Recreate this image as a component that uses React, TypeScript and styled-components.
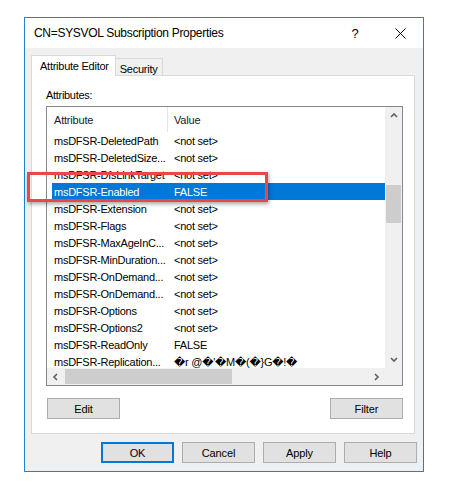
import React from "react";
import styled, { createGlobalStyle } from "styled-components";

const GlobalStyle = createGlobalStyle`
  html, body {
    margin: 0;
    padding: 0;
    background: #ffffff;
  }
  body {
    font-family: "Liberation Sans", Arial, sans-serif;
    font-size: 11px;
    color: #000000;
  }
`;

const Page = styled.div`
  position: relative;
  width: 462px;
  height: 487px;
  padding: 17px 0 0 24px;
  box-sizing: border-box;
`;

const Dialog = styled.div`
  width: 400px;
  height: 455px;
  box-sizing: border-box;
  border: 1px solid #1883d7;
  display: flex;
  flex-direction: column;
  background: #f0f0f0;
`;

const TitleBar = styled.div`
  height: 30px;
  flex: none;
  background: #ffffff;
  display: flex;
  align-items: center;
  padding-left: 9px;
`;

const Title = styled.div`
  flex: 1;
  font-size: 12px;
  letter-spacing: -0.3px;
  color: #000;
`;

const CaptionButton = styled.div<{ $w: number }>`
  width: ${(p) => p.$w}px;
  height: 30px;
  display: flex;
  align-items: center;
  justify-content: center;
  font-size: 13px;
  color: #000;
`;

const Body = styled.div`
  flex: 1;
  display: flex;
  flex-direction: column;
  padding: 7px 8px 8px 6px;
`;

const TabRow = styled.div`
  height: 21px;
  display: flex;
  align-items: flex-end;
`;

const Tab = styled.div<{ $active?: boolean }>`
  box-sizing: border-box;
  height: ${(p) => (p.$active ? 21 : 18)}px;
  padding: ${(p) => (p.$active ? "2px 6px 0 8px" : "2px 4px 0 4px")};
  border: 1px solid #d9d9d9;
  border-bottom: ${(p) => (p.$active ? "none" : "1px solid #d9d9d9")};
  border-left: ${(p) => (p.$active ? "1px solid #d9d9d9" : "none")};
  background: ${(p) => (p.$active ? "#ffffff" : "#f0f0f0")};
  position: relative;
  z-index: ${(p) => (p.$active ? 1 : 0)};
  font-size: 11px;
  letter-spacing: -0.25px;
  line-height: 16px;
  white-space: nowrap;
`;

const Panel = styled.div`
  margin-top: -1px;
  height: 359px;
  box-sizing: border-box;
  border: 1px solid #d9d9d9;
  background: #ffffff;
  display: flex;
  flex-direction: column;
  padding: 12px 11px 14px 14px;
`;

const Label = styled.div`
  line-height: 14px;
  height: 14px;
  margin-bottom: 4px;
  letter-spacing: -0.3px;
`;

const ListBox = styled.div`
  height: 280px;
  box-sizing: border-box;
  border: 1px solid #828790;
  background: #ffffff;
  display: grid;
  grid-template-columns: 1fr 17px;
  grid-template-rows: 1fr 17px;
`;

const View = styled.div`
  overflow: hidden;
  display: flex;
  flex-direction: column;
`;

const Header = styled.div`
  height: 25px;
  flex: none;
  display: flex;
`;

const HeaderCell = styled.div<{ $w?: number }>`
  width: ${(p) => (p.$w ? `${p.$w}px` : "auto")};
  flex: ${(p) => (p.$w ? "none" : "1")};
  padding: 1px 0 0 ${(p) => (p.$w ? 7 : 6)}px;
  border-right: ${(p) => (p.$w ? "1px solid #e5e5e5" : "none")};
  line-height: 24px;
  letter-spacing: -0.2px;
  color: #1a1a1a;
`;

const Row = styled.div<{ $selected?: boolean }>`
  height: 17px;
  flex: none;
  box-sizing: border-box;
  margin-left: 5px;
  padding-top: 1px;
  overflow: hidden;
  display: grid;
  grid-template-columns: 115px 1fr;
  background: ${(p) => (p.$selected ? "#0078d7" : "transparent")};
  color: ${(p) => (p.$selected ? "#ffffff" : "#000000")};
  line-height: 16px;
  letter-spacing: -0.25px;
  white-space: nowrap;
`;

const NameCell = styled.div`
  padding-left: 2px;
  overflow: hidden;
`;

const ValueCell = styled.div`
  padding-left: 7px;
  overflow: hidden;
  font-family: "Liberation Sans", "DejaVu Sans", sans-serif;
`;

const VScroll = styled.div`
  background: #f0f0f0;
  display: flex;
  flex-direction: column;
`;

const HScroll = styled.div`
  background: #f0f0f0;
  display: flex;
`;

const Corner = styled.div`
  background: #f0f0f0;
`;

const Arrow = styled.div`
  width: 17px;
  height: 17px;
  flex: none;
  display: flex;
  align-items: center;
  justify-content: center;
`;

const Track = styled.div`
  flex: 1;
  display: flex;
`;

const VThumb = styled.div`
  margin: 61px 1px 0 1px;
  width: 15px;
  height: 38px;
  background: #cdcdcd;
`;

const HThumb = styled.div`
  margin: 1px 0 1px 1px;
  width: 167px;
  background: #cdcdcd;
`;

const ButtonRow = styled.div`
  margin-top: 12px;
  display: flex;
  justify-content: space-between;
`;

const Button = styled.div<{ $default?: boolean }>`
  width: 73px;
  height: 21px;
  box-sizing: border-box;
  border: ${(p) => (p.$default ? "2px solid #0078d7" : "1px solid #adadad")};
  background: #e1e1e1;
  display: flex;
  align-items: center;
  justify-content: center;
  letter-spacing: -0.1px;
`;

const EditButton = styled(Button)`
  margin-left: 1px;
`;

const Footer = styled.div`
  margin-top: 8px;
  margin-right: -2px;
  display: flex;
  justify-content: flex-end;
  gap: 8px;
`;

const Highlight = styled.div`
  position: absolute;
  left: 27px;
  top: 172px;
  width: 241px;
  height: 30px;
  box-sizing: border-box;
  border: 3px solid #e8474e;
  box-shadow: 1px 2px 4px rgba(0, 0, 0, 0.35);
  pointer-events: none;
`;

const Chevron = ({ dir }: { dir: "up" | "down" | "left" | "right" }) => {
  const points = {
    up: "1,5 4,2 7,5",
    down: "1,2 4,5 7,2",
    left: "5,1 2,4 5,7",
    right: "2,1 5,4 2,7",
  }[dir];
  return (
    <svg width="8" height="8" viewBox="0 0 8 8">
      <polyline points={points} fill="none" stroke="#606060" strokeWidth="1.6" />
    </svg>
  );
};

const rows: [string, string][] = [
  ["msDFSR-DeletedPath", "<not set>"],
  ["msDFSR-DeletedSize...", "<not set>"],
  ["msDFSR-DfsLinkTarget", "<not set>"],
  ["msDFSR-Enabled", "FALSE"],
  ["msDFSR-Extension", "<not set>"],
  ["msDFSR-Flags", "<not set>"],
  ["msDFSR-MaxAgeInC...", "<not set>"],
  ["msDFSR-MinDuration...", "<not set>"],
  ["msDFSR-OnDemand...", "<not set>"],
  ["msDFSR-OnDemand...", "<not set>"],
  ["msDFSR-Options", "<not set>"],
  ["msDFSR-Options2", "<not set>"],
  ["msDFSR-ReadOnly", "FALSE"],
  ["msDFSR-Replication...", "\uFFFDr  @\uFFFD'\uFFFDM\uFFFD(\uFFFD}G\uFFFD!\uFFFD"],
];

const App = () => {
  return (
    <>
      <GlobalStyle />
      <Page>
        <Dialog>
          <TitleBar>
            <Title>CN=SYSVOL Subscription Properties</Title>
            <CaptionButton $w={44}>?</CaptionButton>
            <CaptionButton $w={46}>
              <svg width="11" height="11" viewBox="0 0 11 11">
                <path d="M0.5 0.5 L10.5 10.5 M10.5 0.5 L0.5 10.5" stroke="#000" strokeWidth="1" />
              </svg>
            </CaptionButton>
          </TitleBar>
          <Body>
            <TabRow>
              <Tab $active>Attribute Editor</Tab>
              <Tab>Security</Tab>
            </TabRow>
            <Panel>
              <Label>Attributes:</Label>
              <ListBox>
                <View>
                  <Header>
                    <HeaderCell $w={113}>Attribute</HeaderCell>
                    <HeaderCell>Value</HeaderCell>
                  </Header>
                  {rows.map(([name, value], i) => (
                    <Row key={i} $selected={i === 3}>
                      <NameCell>{name}</NameCell>
                      <ValueCell>{value}</ValueCell>
                    </Row>
                  ))}
                </View>
                <VScroll>
                  <Arrow>
                    <Chevron dir="up" />
                  </Arrow>
                  <Track>
                    <VThumb />
                  </Track>
                  <Arrow>
                    <Chevron dir="down" />
                  </Arrow>
                </VScroll>
                <HScroll>
                  <Arrow>
                    <Chevron dir="left" />
                  </Arrow>
                  <Track>
                    <HThumb />
                  </Track>
                  <Arrow>
                    <Chevron dir="right" />
                  </Arrow>
                </HScroll>
                <Corner />
              </ListBox>
              <ButtonRow>
                <EditButton>Edit</EditButton>
                <Button>Filter</Button>
              </ButtonRow>
            </Panel>
            <Footer>
              <Button $default>OK</Button>
              <Button>Cancel</Button>
              <Button>Apply</Button>
              <Button>Help</Button>
            </Footer>
          </Body>
        </Dialog>
        <Highlight />
      </Page>
    </>
  );
};

export default App;
